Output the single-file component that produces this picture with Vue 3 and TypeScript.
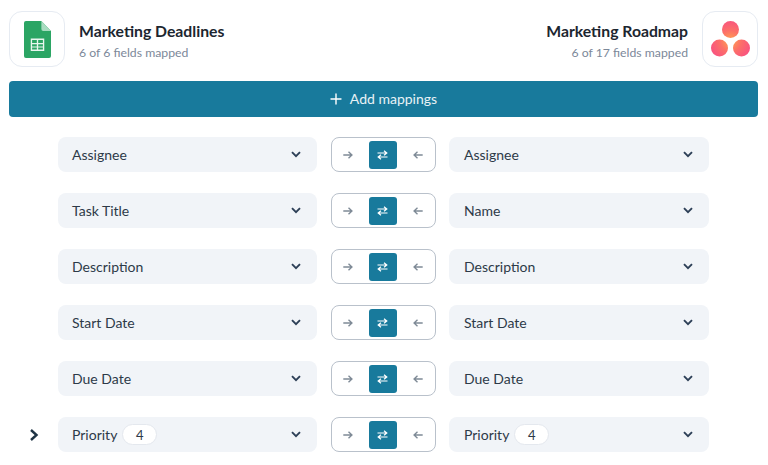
<script setup lang="ts">
interface Row { left: string; right: string; count?: number }
const rows: Row[] = [
  { left: 'Assignee', right: 'Assignee' },
  { left: 'Task Title', right: 'Name' },
  { left: 'Description', right: 'Description' },
  { left: 'Start Date', right: 'Start Date' },
  { left: 'Due Date', right: 'Due Date' },
  { left: 'Priority', right: 'Priority', count: 4 },
]
</script>

<template>
  <div class="page">
    <header class="head">
      <div class="source">
        <div class="logo">
          <svg width="27" height="37" viewBox="0 0 28 37" preserveAspectRatio="none">
            <path d="M2 0H18L28 10V35a2 2 0 0 1-2 2H2a2 2 0 0 1-2-2V2a2 2 0 0 1 2-2Z" fill="#2BA564" />
            <path d="M18 0L28 10H20a2 2 0 0 1-2-2Z" fill="#A8DCC0" />
            <path d="M7 17.5H21V30H7Z M8.4 18.9V22H13.3V18.9Z M14.7 18.9V22H19.6V18.9Z M8.4 23.2V25.4H13.3V23.2Z M14.7 23.2V25.4H19.6V23.2Z M8.4 26.6V28.6H13.3V26.6Z M14.7 26.6V28.6H19.6V26.6Z" fill="#E9F6EF" fill-rule="evenodd" />
          </svg>
        </div>
        <div class="titles">
          <div class="title">Marketing Deadlines</div>
          <div class="sub">6 of 6 fields mapped</div>
        </div>
      </div>
      <div class="source end">
        <div class="titles right">
          <div class="title">Marketing Roadmap</div>
          <div class="sub">6 of 17 fields mapped</div>
        </div>
        <div class="logo">
          <svg width="39" height="36" viewBox="0 0 39 36">
            <defs>
              <radialGradient id="asana" gradientUnits="userSpaceOnUse" cx="19.5" cy="20" r="21">
                <stop offset="0" stop-color="#FFA650" />
                <stop offset="0.5" stop-color="#FC7068" />
                <stop offset="1" stop-color="#F9547F" />
              </radialGradient>
            </defs>
            <circle cx="19.5" cy="8.5" r="8.5" fill="url(#asana)" />
            <circle cx="8.5" cy="27" r="8.5" fill="url(#asana)" />
            <circle cx="30.5" cy="27" r="8.5" fill="url(#asana)" />
          </svg>
        </div>
      </div>
    </header>

    <button class="add" type="button">
      <svg width="12" height="12" viewBox="0 0 12 12" class="plus">
        <path d="M6 1V11M1 6H11" stroke="#fff" stroke-width="1.4" stroke-linecap="round" />
      </svg>
      Add mappings
    </button>

    <div class="rows">
      <div v-for="(row, i) in rows" :key="i" class="row">
        <div class="expander">
          <svg v-if="row.count" width="10" height="14" viewBox="0 0 10 14">
            <path d="M2 2L7.5 7L2 12" fill="none" stroke="#1F3344" stroke-width="2.4" />
          </svg>
        </div>
        <div class="select">
          <span class="label">{{ row.left }}</span>
          <span v-if="row.count" class="count">{{ row.count }}</span>
          <svg class="chev" width="10" height="7" viewBox="0 0 10 7">
            <path d="M1 1.2L5 5.2L9 1.2" fill="none" stroke="#2D3F57" stroke-width="1.9" />
          </svg>
        </div>
        <div class="toggle">
          <span class="opt">
            <svg width="10" height="10" viewBox="0 0 10 10">
              <path d="M0.3 5H8.8M5.5 1.8L8.9 5L5.5 8.2" fill="none" stroke="#7F8B97" stroke-width="1.4" />
            </svg>
          </span>
          <span class="opt on">
            <svg width="11" height="10" viewBox="0 0 11 10">
              <path d="M0.5 3H9.5M7 0.8L9.8 3L7 5.2M10.5 7H1.5M4 4.8L1.2 7L4 9.2" fill="none" stroke="#fff" stroke-width="1.2" />
            </svg>
          </span>
          <span class="opt">
            <svg width="10" height="10" viewBox="0 0 10 10">
              <path d="M9.7 5H1.2M4.5 1.8L1.1 5L4.5 8.2" fill="none" stroke="#7F8B97" stroke-width="1.4" />
            </svg>
          </span>
        </div>
        <div class="select">
          <span class="label">{{ row.right }}</span>
          <span v-if="row.count" class="count">{{ row.count }}</span>
          <svg class="chev" width="10" height="7" viewBox="0 0 10 7">
            <path d="M1 1.2L5 5.2L9 1.2" fill="none" stroke="#2D3F57" stroke-width="1.9" />
          </svg>
        </div>
      </div>
    </div>
  </div>
</template>

<style>
html, body { background: #fff; }
</style>

<style scoped>
.page {
  width: 768px;
  height: 465px;
  overflow: hidden;
  padding: 11px 10px 0 9px;
  box-sizing: border-box;
  font-family: Lato, "Liberation Sans", sans-serif;
  color: #1f2b38;
}
.head {
  display: flex;
  justify-content: space-between;
  height: 56px;
}
.source {
  display: flex;
  align-items: center;
  gap: 14px;
}
.logo {
  width: 56px;
  height: 56px;
  box-sizing: border-box;
  border: 1px solid #e6ebf2;
  border-radius: 13px;
  display: flex;
  align-items: center;
  justify-content: center;
  background: #fff;
}
.titles { margin-top: 4px; }
.right { text-align: right; }
.title {
  font-size: 15.75px;
  line-height: 22px;
  font-weight: 700;
  color: #1c2630;
}
.sub {
  font-size: 12.25px;
  line-height: 18px;
  margin-top: 2px;
  color: #7c8899;
}
.add {
  display: flex;
  align-items: center;
  justify-content: center;
  gap: 8px;
  width: 100%;
  height: 35.5px;
  margin-top: 14px;
  border: 0;
  border-radius: 4px;
  background: #187a9c;
  color: #e8f2f6;
  font: 14px Lato, "Liberation Sans", sans-serif;
  padding: 0;
}
.rows {
  display: flex;
  flex-direction: column;
  gap: 21px;
  margin-top: 20.5px;
}
.row {
  display: grid;
  grid-template-columns: 49px 259px 132px 260px;
  align-items: center;
  height: 35px;
}
.expander {
  display: flex;
  padding-left: 19.5px;
}
.select {
  display: flex;
  align-items: center;
  height: 35px;
  box-sizing: border-box;
  padding: 0 16px 0 14px;
  border-radius: 8px;
  background: #f1f4f8;
  font-size: 14px;
  color: #2d3a48;
}
.row > .select:last-child { padding-left: 15px; }
.toggle {
  display: flex;
  align-items: center;
  justify-content: space-between;
  justify-self: center;
  width: 105px;
  height: 35px;
  box-sizing: border-box;
  padding: 0 3px 0 2px;
  border: 1px solid #b9c1cb;
  border-radius: 8px;
  background: #fff;
}
.opt {
  width: 28px;
  height: 28px;
  border-radius: 3px;
  display: flex;
  align-items: center;
  justify-content: center;
}
.on { background: #187a9c; }
.count {
  display: inline-flex;
  align-items: center;
  justify-content: center;
  width: 35px;
  height: 21px;
  margin-left: 5px;
  box-sizing: border-box;
  border: 1px solid #e4e8ee;
  border-radius: 11px;
  background: #fff;
  font-size: 13px;
}
.chev { margin-left: auto; }
</style>
